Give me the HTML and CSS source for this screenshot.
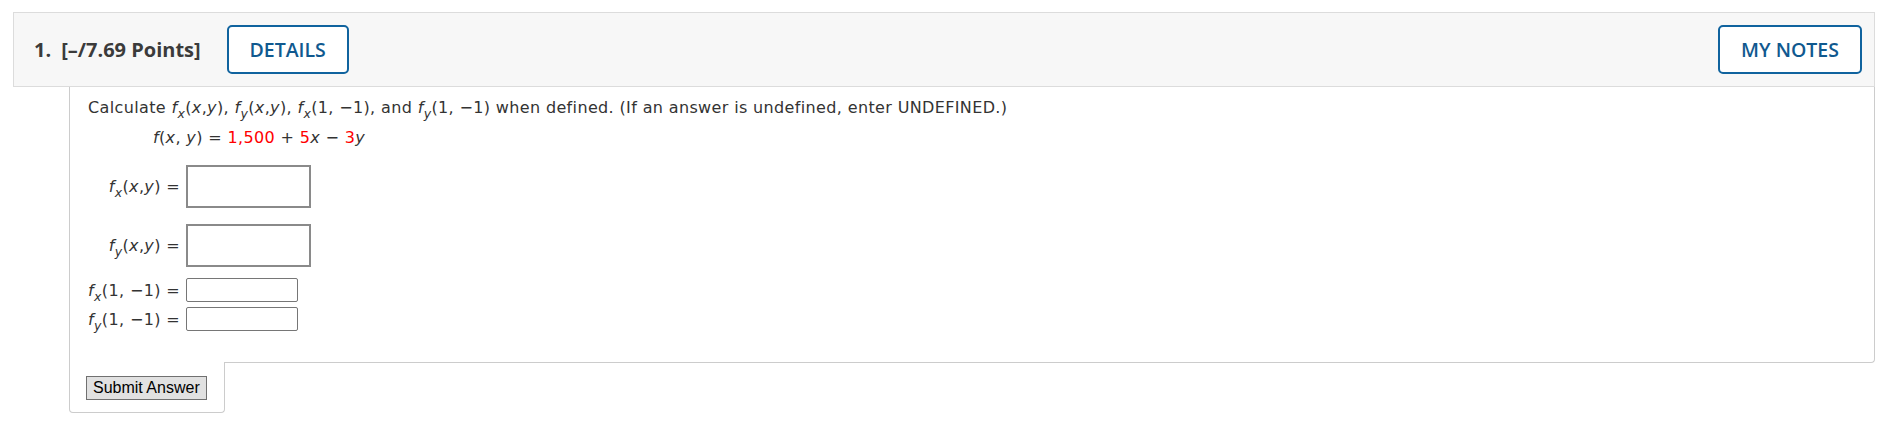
FILE: index.html
```html
<!DOCTYPE html>
<html>
<head>
<meta charset="utf-8">
<link rel="stylesheet" href="styles.css">
</head>
<body>
<div class="header">
  <span class="qnum">1.</span>
  <span class="points">[–/7.69 Points]</span>
  <button class="hbtn details">DETAILS</button>
  <span class="spacer"></span>
  <button class="hbtn notes">MY NOTES</button>
</div>
<div class="content">
  <p class="prompt">Calculate <i>f</i><sub><i>x</i></sub>(<i>x</i>,<i>y</i>), <i>f</i><sub><i>y</i></sub>(<i>x</i>,<i>y</i>), <i>f</i><sub><i>x</i></sub>(1, −1), and <i>f</i><sub><i>y</i></sub>(1, −1) when defined. (If an answer is undefined, enter UNDEFINED.)</p>
  <p class="func"><i>f</i>(<i>x</i>, <i>y</i>) = <span class="red">1,500</span> + <span class="red">5</span><i>x</i> − <span class="red">3</span><i>y</i></p>
  <div class="answers big">
    <span class="label"><i>f</i><sub><i>x</i></sub>(<i>x</i>,<i>y</i>) =</span>
    <input class="box-big" type="text">
    <span class="label"><i>f</i><sub><i>y</i></sub>(<i>x</i>,<i>y</i>) =</span>
    <input class="box-big" type="text">
  </div>
  <div class="answers small">
    <span class="label"><i>f</i><sub><i>x</i></sub>(1, −1) =</span>
    <input class="box-small" type="text">
    <span class="label"><i>f</i><sub><i>y</i></sub>(1, −1) =</span>
    <input class="box-small" type="text">
  </div>
</div>
<div class="submit-tab">
  <button class="submit">Submit Answer</button>
</div>
</body>
</html>
```
FILE: styles.css
```css
html, body {
  margin: 0;
  padding: 0;
  background: #ffffff;
}
body {
  font-family: "DejaVu Sans", Verdana, sans-serif;
  color: #333;
}
.header {
  margin: 12px 20px 0 13px;
  height: 73px;
  border: 1px solid #dcdcdc;
  background: #f7f7f7;
  display: flex;
  align-items: center;
  padding: 0 12px 0 20px;
  font-family: "Open Sans", sans-serif;
}
.qnum {
  font-weight: 700;
  font-size: 20px;
  color: #3b3b3b;
  margin-right: 10px;
}
.points {
  font-weight: 700;
  font-size: 20px;
  color: #3b3b3b;
  margin-right: 26px;
}
.hbtn {
  font-family: "Open Sans", sans-serif;
  font-weight: 600;
  font-size: 19.5px;
  color: #10598f;
  background: #ffffff;
  border: 2px solid #10639e;
  border-radius: 5px;
  height: 49px;
  padding: 0;
  box-sizing: border-box;
}
.details { width: 122px; }
.notes { width: 144px; }
.spacer { flex: 1; }
.content {
  margin: 0 20px 0 69px;
  border: 1px solid #cccccc;
  border-top: none;
  border-bottom-right-radius: 4px;
  padding: 4px 18px 30px 18px;
  height: 276px;
  box-sizing: border-box;
  font-size: 16px;
  letter-spacing: 0.36px;
}
.prompt {
  margin: 0;
  line-height: 34px;
}
.func {
  margin: 0 0 0 65px;
  line-height: 26px;
}
sub {
  font-size: 78%;
  vertical-align: -5px;
  line-height: 0;
}
.red { color: #ff0000; }
.answers {
  display: grid;
  grid-template-columns: 92px auto;
  justify-content: start;
  align-items: center;
  column-gap: 6px;
}
.big {
  margin-top: 14px;
  row-gap: 16px;
}
.small {
  margin-top: 11px;
  row-gap: 5px;
}
.label {
  justify-self: end;
  text-align: right;
  white-space: nowrap;
}
input {
  margin: 0;
  box-sizing: border-box;
  background: #ffffff;
  font: inherit;
}
.box-big {
  width: 125px;
  height: 43px;
  border: 2px solid #8a8a8a;
  border-radius: 0;
}
.box-small {
  width: 112px;
  height: 24px;
  border: 1px solid #767676;
  border-radius: 2px;
}
.submit-tab {
  margin: -1px 0 0 69px;
  width: 156px;
  height: 51px;
  box-sizing: border-box;
  background: #ffffff;
  border: 1px solid #cccccc;
  border-top: none;
  border-radius: 0 0 4px 4px;
  padding: 14px 0 0 16px;
}
.submit {
  font-family: "Liberation Sans", Arial, sans-serif;
  font-size: 16px;
  letter-spacing: 0;
  color: #000;
  background: #e1e1e1;
  border: 1px solid #707070;
  border-radius: 0;
  height: 24px;
  padding: 0 6px;
  margin: 0;
}
```
